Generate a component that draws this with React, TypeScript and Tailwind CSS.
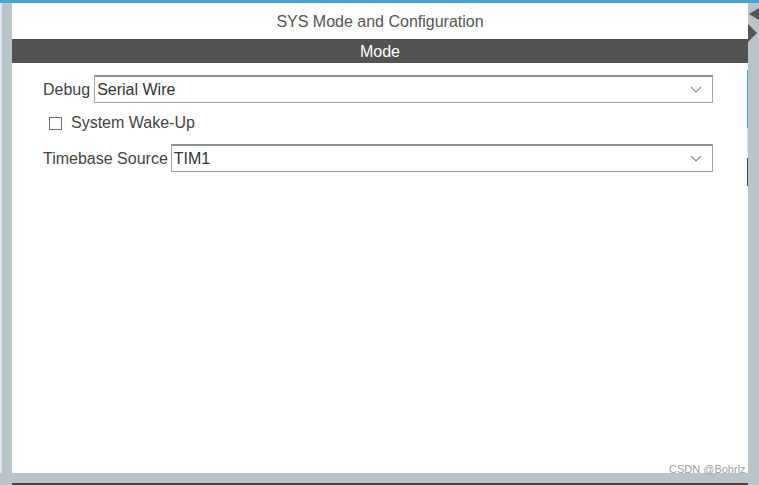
import React from "react"

function Chevron() {
  return (
    <svg width="12" height="7" viewBox="0 0 12 7" className="mr-[10px]">
      <path d="M1 1 L6 6 L11 1" fill="none" stroke="#8a8e91" strokeWidth="1.2" />
    </svg>
  )
}

function Select({ value }: { value: string }) {
  return (
    <div className="flex flex-1 h-[28px] items-center justify-between border border-[#a0a4a7] border-t-2 border-t-[#8e9295] bg-white pl-[2px]">
      <span className="text-[16px] text-[#333]">{value}</span>
      <Chevron />
    </div>
  )
}

export default function App() {
  return (
    <div
      className="relative flex h-[485px] w-[759px] flex-col overflow-hidden bg-[#b9c4ca]"
      style={{ fontFamily: '"Liberation Sans", Arial, sans-serif' }}
    >
      <div className="h-[3px] bg-[#3aa9de]" />
      <div className="flex h-[470px]">
        <div className="w-[2px] bg-[#dfe4e7]" />
        <div className="w-[10px]" />
        <div className="relative flex flex-1 flex-col bg-white">
          <div className="flex h-[36px] items-center justify-center pt-[1px] text-[16px] text-[#555]">
            SYS Mode and Configuration
          </div>
          <div className="flex h-[24px] items-center justify-center bg-[#525352] pt-[1px] text-[16px] text-white">
            Mode
          </div>
          <div className="flex flex-col pl-[31px] pr-[35px] pt-[12px] text-[16px] leading-[24px] text-[#444]">
            <div className="flex items-center">
              <span className="mr-[4px] pt-[1px]">Debug</span>
              <Select value="Serial Wire" />
            </div>
            <div className="mt-[8px] flex items-center pl-[6px]">
              <div className="h-[13px] w-[13px] border-[1.5px] border-[#707070] bg-white" />
              <span className="ml-[9px]">System Wake-Up</span>
            </div>
            <div className="mt-[9px] flex items-center">
              <span className="mr-[3px] pt-[1px]">Timebase Source</span>
              <Select value="TIM1" />
            </div>
          </div>
          <div className="absolute right-0 top-[67px] h-[58px] w-px bg-[#3aa9de]" />
          <div className="absolute right-0 top-[125px] h-[24px] w-px bg-[#d6dadd]" />
          <div className="absolute right-0 top-[155px] h-[28px] w-px bg-[#4a4444]" />
        </div>
        <div className="flex w-[11px] flex-col">
          <svg width="11" height="42" viewBox="0 0 11 42">
            <path d="M11 5 L1 11 L11 17 Z" fill="#555" />
            <path d="M0 21 L9 30 L0 39 Z" fill="#555" />
          </svg>
        </div>
      </div>
      <div className="h-[10px]" />
      <div className="ml-[12px] h-[2px] w-[736px] bg-[#444]" />
      <div className="absolute left-[669px] top-[463px] text-[11px] leading-[13px] text-[#a0a0a0]">
        CSDN @Bohrlz
      </div>
    </div>
  )
}
